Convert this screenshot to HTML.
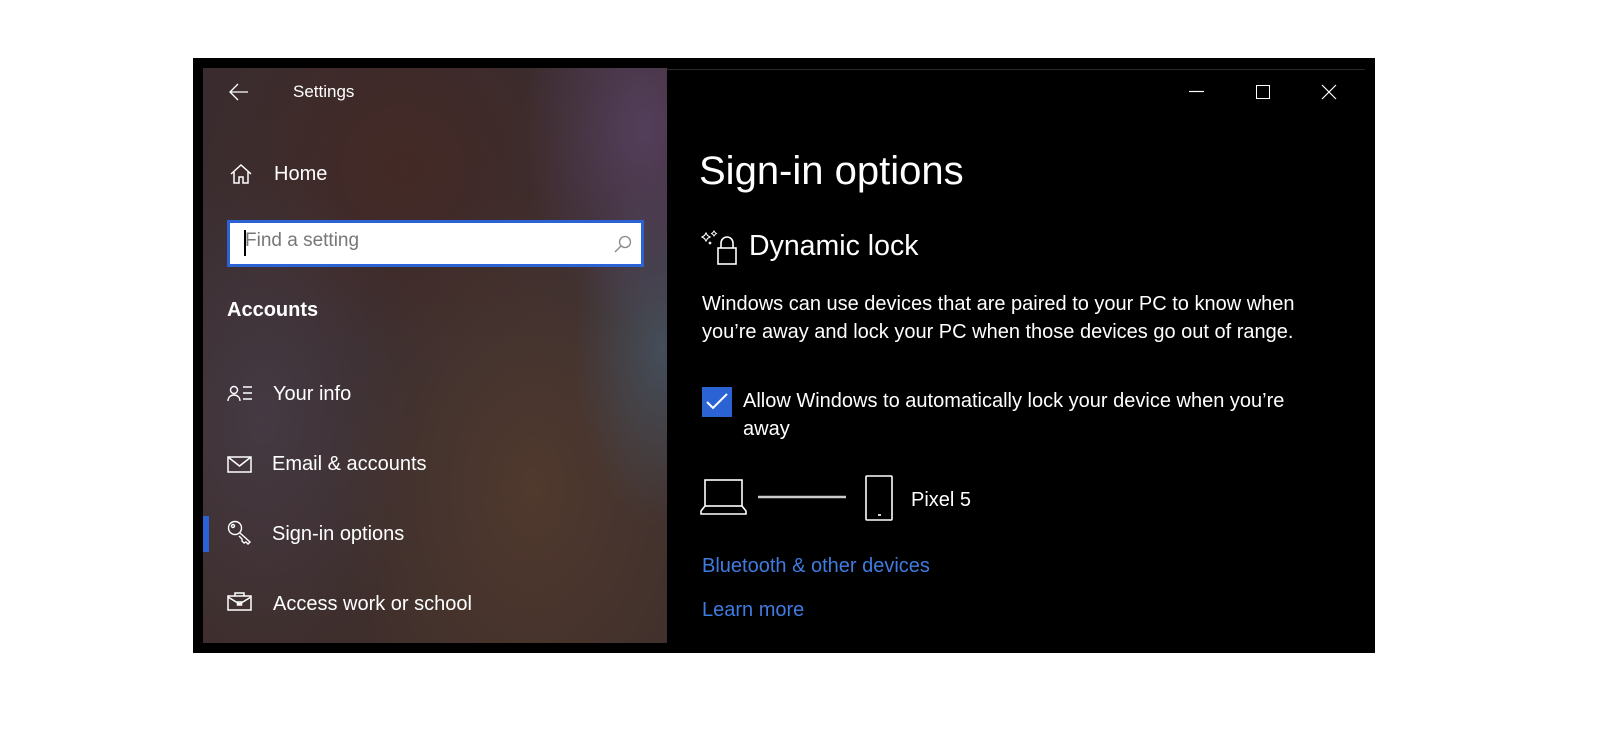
<!DOCTYPE html>
<html><head><meta charset="utf-8"><style>
*{margin:0;padding:0;box-sizing:border-box}
body{width:1623px;height:736px;background:#fff;position:relative;overflow:hidden;font-family:"Liberation Sans",sans-serif;color:#fff}
.win{position:absolute;left:193px;top:58px;width:1182px;height:595px;background:#000}
.side{position:absolute;left:203px;top:68px;width:464px;height:575px;overflow:hidden;
background:
radial-gradient(ellipse 120px 200px at 440px 60px,rgba(95,70,110,.7),transparent),
radial-gradient(ellipse 90px 180px at 460px 280px,rgba(70,85,100,.8),transparent),
radial-gradient(ellipse 200px 300px at 330px 420px,rgba(85,60,45,.8),transparent),
radial-gradient(ellipse 150px 250px at 60px 350px,rgba(75,65,80,.6),transparent),
radial-gradient(ellipse 200px 200px at 200px 100px,rgba(70,40,35,.8),transparent),
linear-gradient(180deg,#3a2c2e,#3b2e30 50%,#3e2e2c);}
.t{position:absolute;white-space:nowrap}
.s{font-size:20px}
.r{font-size:20px;line-height:28px}
a{color:#3f7be0;text-decoration:none}
</style></head><body>
<div class="win"></div>
<div style="position:absolute;left:667px;top:69px;width:698px;height:1px;background:#2a2a2a"></div>
<div class="side">
<svg style="position:absolute;left:25px;top:14px" width="22" height="20" viewBox="0 0 22 20" fill="none" stroke="#fff" stroke-width="1.3"><path d="M20 10H2M10 2L2 10l8 8"/></svg>
<div class="t" style="left:90px;top:14px;font-size:17px">Settings</div>
<svg style="position:absolute;left:26px;top:95px" width="24" height="22" viewBox="0 0 24 22" fill="none" stroke="#fff" stroke-width="1.5"><path d="M2 11L12 2l10 9M5 9v11h5v-6h4v6h5V9"/></svg>
<div class="t s" style="left:71px;top:95px">Home</div>
<div style="position:absolute;left:24px;top:152px;width:417px;height:47px;background:#fff;border:3px solid #2b63d5"></div>
<div style="position:absolute;left:41px;top:162px;width:2px;height:26px;background:#000"></div>
<div class="t" style="left:42px;top:162px;font-size:19px;color:#777">Find a setting</div>
<svg style="position:absolute;left:410px;top:166px" width="20" height="20" viewBox="0 0 20 20" fill="none" stroke="#888" stroke-width="1.3"><circle cx="12" cy="8" r="5.5"/><path d="M8 12L2 18"/></svg>
<div class="t" style="left:24px;top:231px;font-size:20px;font-weight:bold">Accounts</div>
<svg style="position:absolute;left:24px;top:317px" width="26" height="17" viewBox="0 0 26 17" fill="none" stroke="#fff" stroke-width="1.4"><circle cx="7" cy="5" r="3.5"/><path d="M1 16c0-4 3-6 6-6s6 2 6 6M16 2h9M16 8h9M16 14h9"/></svg>
<div class="t s" style="left:70px;top:315px">Your info</div>
<svg style="position:absolute;left:24px;top:388px" width="25" height="17" viewBox="0 0 25 17" fill="none" stroke="#fff" stroke-width="1.5"><rect x="1" y="1" width="23" height="15"/><path d="M1 1l11.5 9L24 1"/></svg>
<div class="t s" style="left:69px;top:385px">Email &amp; accounts</div>
<div style="position:absolute;left:0;top:448px;width:6px;height:36px;background:#2b63d5"></div>
<svg style="position:absolute;left:24px;top:452px" width="25" height="25" viewBox="0 0 25 25" fill="none" stroke="#fff" stroke-width="1.4"><circle cx="8" cy="8" r="6.5"/><circle cx="6" cy="6" r="1.5"/><path d="M13 13l10 9-2 2-2-2-2 1-2-2v-2l-3-3"/></svg>
<div class="t s" style="left:69px;top:455px">Sign-in options</div>
<svg style="position:absolute;left:24px;top:524px" width="25" height="19" viewBox="0 0 25 19" fill="none" stroke="#fff" stroke-width="1.5"><rect x="1" y="4" width="23" height="14"/><path d="M8 4V1h9v3M1 5l11.5 7L24 5"/><rect x="10.5" y="10" width="4" height="3"/></svg>
<div class="t s" style="left:70px;top:525px">Access work or school</div>
</div>
<svg style="position:absolute;left:1188px;top:90px" width="18" height="4"><path d="M1 1.5h15" stroke="#fff" stroke-width="1.2"/></svg>
<div style="position:absolute;left:1256px;top:85px;width:14px;height:14px;border:1.3px solid #fff"></div>
<svg style="position:absolute;left:1321px;top:84px" width="16" height="16" viewBox="0 0 16 16" stroke="#fff" stroke-width="1.2"><path d="M1 1l14 14M15 1L1 15"/></svg>
<div class="t" style="left:699px;top:149px;font-size:40px">Sign-in options</div>
<svg style="position:absolute;left:701px;top:230px" width="40" height="36" viewBox="0 0 40 36" fill="none" stroke="#fff" stroke-width="1.6"><path d="M5 3l1.5 2.5L9 7 6.5 8.5 5 11 3.5 8.5 1 7l2.5-1.5z" stroke-width="1.2"/><path d="M13 1l1 1.5 1.5 1-1.5 1-1 1.5-1-1.5-1.5-1 1.5-1z" stroke-width="1"/><path d="M9 12l1 1-1 1-1-1z" stroke-width="1"/><rect x="17" y="18" width="18" height="16"/><path d="M20 18v-5a6 6 0 0 1 12 0v5"/></svg>
<div class="t" style="left:749px;top:230px;font-size:28.5px">Dynamic lock</div>
<div class="t r" style="left:702px;top:290px">Windows can use devices that are paired to your PC to know when<br>you’re away and lock your PC when those devices go out of range.</div>
<div style="position:absolute;left:702px;top:387px;width:30px;height:30px;background:#2b63d5"></div>
<svg style="position:absolute;left:702px;top:387px" width="30" height="30" viewBox="0 0 30 30" fill="none" stroke="#fff" stroke-width="2"><path d="M5 15l6 6L25 7"/></svg>
<div class="t r" style="left:743px;top:387px">Allow Windows to automatically lock your device when you’re<br>away</div>
<svg style="position:absolute;left:700px;top:475px" width="280" height="50" viewBox="0 0 280 50" fill="none" stroke="#fff" stroke-width="1.6"><rect x="5" y="5" width="37" height="26"/><path d="M5 31l-4 5v3h45v-3l-4-5"/><path d="M58 22h88" stroke="#ccc" stroke-width="2.5"/><rect x="166" y="1" width="26" height="44" rx="1"/><path d="M178 40h3"/></svg>
<div class="t r" style="left:911px;top:486px">Pixel 5</div>
<div class="t r" style="left:702px;top:552px"><a>Bluetooth &amp; other devices</a></div>
<div class="t r" style="left:702px;top:596px"><a>Learn more</a></div>
</body></html>
